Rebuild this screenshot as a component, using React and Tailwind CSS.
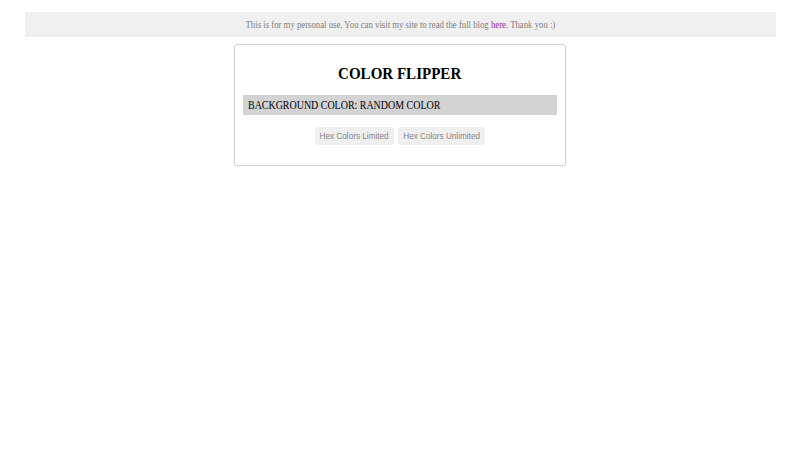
export default function App() {
  return (
    <div className="min-h-[450px] bg-white pt-3">
      <div
        className="mx-auto flex h-[25px] w-[751px] items-center justify-center bg-[#f0f0f0] text-[10px] text-[#808080]"
        style={{ fontFamily: '"Liberation Serif", serif' }}
      >
        <p className="inline-block origin-center scale-x-[0.873] whitespace-nowrap">
          This is for my personal use. You can visit my site to read the full blog{" "}
          <a href="#" className="text-[#a4189c]">here</a>. Thank you :)
        </p>
      </div>

      <div
        className="mx-auto mt-[7px] w-[332px] rounded-[3px] border border-[#d0d0d0] px-2 pt-[18px] pb-[20px] shadow-[0_0_2px_rgba(0,0,0,0.08)]"
        style={{ fontFamily: '"Liberation Serif", serif' }}
      >
        <h1 className="text-center text-[17px] font-bold leading-[22px] text-black">
          <span className="inline-block origin-center scale-x-[0.884]">COLOR FLIPPER</span>
        </h1>
        <div className="mt-[10px] flex h-[20px] items-center bg-[#d3d3d3] pl-[5px] text-[12px] text-black">
          <span className="inline-block origin-left scale-x-[0.83] whitespace-nowrap">
            BACKGROUND COLOR: RANDOM COLOR
          </span>
        </div>
        <div
          className="mt-[12px] flex justify-center gap-[4px]"
          style={{ fontFamily: '"Liberation Sans", Arial, sans-serif' }}
        >
          <button className="flex h-[18px] w-[79px] items-center justify-center rounded-[3px] bg-[#efefef] text-[9.5px] text-[#858585]">
            <span className="inline-block origin-center scale-x-[0.86] whitespace-nowrap">Hex Colors Limited</span>
          </button>
          <button className="flex h-[18px] w-[87px] items-center justify-center rounded-[3px] bg-[#efefef] text-[9.5px] text-[#858585]">
            <span className="inline-block origin-center scale-x-[0.86] whitespace-nowrap">Hex Colors Unlimited</span>
          </button>
        </div>
      </div>
    </div>
  );
}
